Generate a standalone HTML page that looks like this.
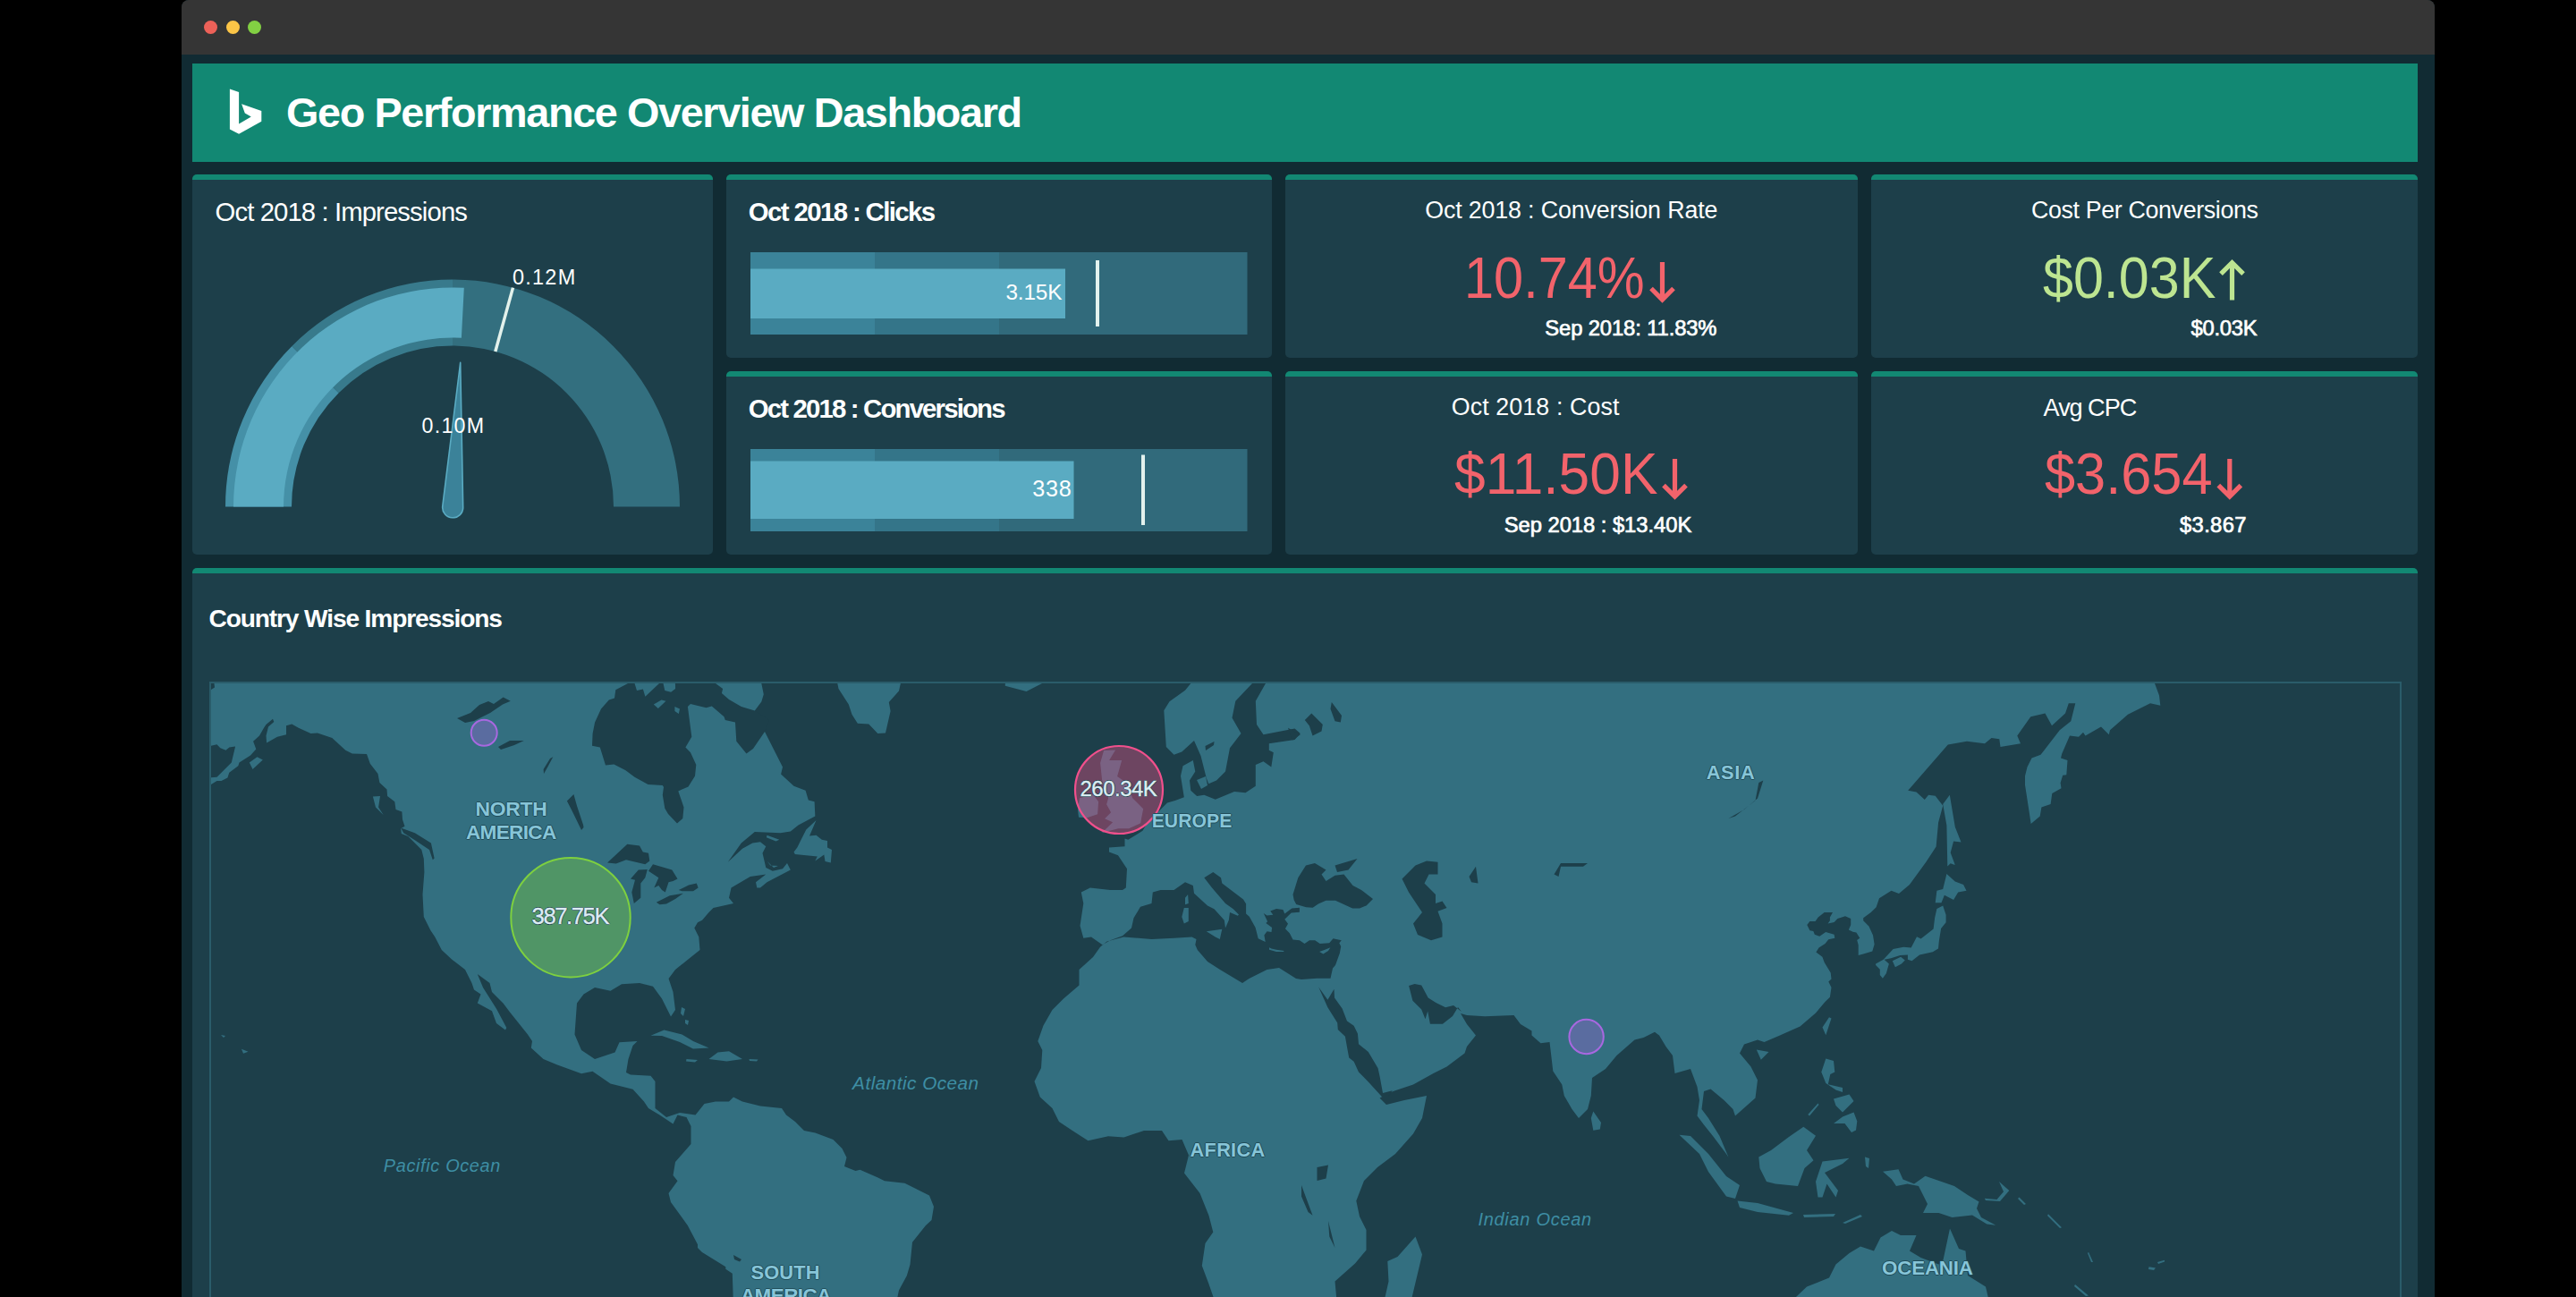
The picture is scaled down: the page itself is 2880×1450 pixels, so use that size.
<!DOCTYPE html>
<html><head><meta charset="utf-8">
<style>
html,body{margin:0;padding:0;width:2880px;height:1450px;overflow:hidden;background:#000;}
*{box-sizing:border-box;}
body{font-family:"Liberation Sans",sans-serif;position:relative;}
.abs{position:absolute;}
.win{position:absolute;left:203px;top:0;width:2519px;height:1450px;background:#112b33;border-radius:8px 8px 0 0;overflow:hidden;}
.chrome{position:absolute;left:0;top:0;width:100%;height:61px;background:#353535;}
.dot{position:absolute;top:23px;width:15px;height:15px;border-radius:50%;}
.hdr{position:absolute;left:215px;top:71px;width:2488px;height:110px;background:#128873;}
.card{position:absolute;background:#1d3f4a;border-top:6px solid #128873;border-radius:5px;}
.t{position:absolute;white-space:nowrap;line-height:1;color:#fff;}
.lab{color:#87c5d8;font-weight:700;text-shadow:1px 0 0 #1f4c59,-1px 0 0 #1f4c59,0 1px 0 #1f4c59,0 -1px 0 #1f4c59;}
.ocn{color:#3e8ea4;}
.bub{color:#dcedf3;-webkit-text-stroke:0.4px #dcedf3;text-shadow:1px 0 0 #24424c,-1px 0 0 #24424c,0 1px 0 #24424c,0 -1px 0 #24424c;}
</style></head>
<body>
<div class="win">
  <div class="chrome"></div>
  <div class="dot" style="left:25px;background:#ed6158"></div>
  <div class="dot" style="left:50px;background:#fbc547"></div>
  <div class="dot" style="left:74px;background:#82d043"></div>
</div>
<div class="hdr"></div>
<svg class="abs" style="left:0;top:0" width="2880" height="200">
  <path d="M256.9,99.6 L267.1,103.1 L267.1,138.5 L280.8,130.4 L273.8,126.5 L270.1,116.3 L292.3,123.9 L292.3,135.7 L267.1,149.8 L256.9,144.5 Z" fill="#fff"/>
</svg>
<div class="t" style="left:320px;top:103px;font-size:46.8px;font-weight:700;letter-spacing:-1.38px">Geo Performance Overview Dashboard</div>

<div class="card" style="left:215px;top:195px;width:582px;height:425px"></div>
<div class="card" style="left:812px;top:195px;width:610px;height:205px"></div>
<div class="card" style="left:812px;top:415px;width:610px;height:205px"></div>
<div class="card" style="left:1437px;top:195px;width:640px;height:205px"></div>
<div class="card" style="left:1437px;top:415px;width:640px;height:205px"></div>
<div class="card" style="left:2092px;top:195px;width:611px;height:205px"></div>
<div class="card" style="left:2092px;top:415px;width:611px;height:205px"></div>
<div class="card" style="left:215px;top:635px;width:2488px;height:900px;border-radius:5px 5px 0 0"></div>

<svg class="abs" style="left:0;top:0" width="2880" height="640">
  <path d="M252.0,566.5 A254,254 0 0 1 326.4,386.9 L378.7,439.2 A180,180 0 0 0 326.0,566.5 Z" fill="#4590a7"/>
  <path d="M326.4,386.9 A254,254 0 0 1 506.0,312.5 L506.0,386.5 A180,180 0 0 0 378.7,439.2 Z" fill="#387a8c"/>
  <path d="M506.0,312.5 A254,254 0 0 1 760.0,566.5 L686.0,566.5 A180,180 0 0 0 506.0,386.5 Z" fill="#336f7f"/>
  <path d="M261.0,566.5 A245,245 0 0 1 518.8,321.8 L515.9,377.8 A189,189 0 0 0 317.0,566.5 Z" fill="#5aabc2"/>
  <path d="M553.8,393.0 L573.5,321.6" stroke="#e3f2ec" stroke-width="3.5"/>
  <path d="M514.7,405.4 L517.7,567.9 A11.5,11.5 0 0 1 494.7,566.7 Z" fill="#3b8299" stroke="#5aabc2" stroke-width="1.6" stroke-linejoin="round"/>
  <!-- bullet clicks -->
  <rect x="839" y="282" width="139" height="92" fill="#3b8399"/>
  <rect x="978" y="282" width="139" height="92" fill="#347589"/>
  <rect x="1117" y="282" width="277.5" height="92" fill="#316a7b"/>
  <rect x="839" y="300.5" width="352" height="55.5" fill="#5aabc2"/>
  <rect x="1225" y="291" width="4" height="74" fill="#e3f2ee"/>
  <!-- bullet conversions -->
  <rect x="839" y="502" width="139" height="92" fill="#3b8399"/>
  <rect x="978" y="502" width="139" height="92" fill="#347589"/>
  <rect x="1117" y="502" width="277.5" height="92" fill="#316a7b"/>
  <rect x="839" y="515.5" width="361.5" height="64.5" fill="#5aabc2"/>
  <rect x="1276" y="508.5" width="4" height="78.5" fill="#e3f2ee"/>
</svg>
<div class="t" style="left:240.5px;top:222.2px;font-size:29.28px;letter-spacing:-0.881px;font-weight:400;color:#fff">Oct 2018 : Impressions</div>
<div class="t" style="left:573px;top:299.0px;font-size:23.48px;letter-spacing:1.25px;font-weight:400;color:#fff">0.12M</div>
<div class="t" style="left:471.5px;top:464.7px;font-size:23.19px;letter-spacing:1.275px;font-weight:400;color:#fff">0.10M</div>
<div class="t" style="left:836.8px;top:222.0px;font-size:29.42px;letter-spacing:-1.631px;font-weight:700;color:#fff">Oct 2018 : Clicks</div>
<div class="t" style="left:1124.5px;top:315.1px;font-size:24.35px;letter-spacing:-0.175px;font-weight:400;color:#fff">3.15K</div>
<div class="t" style="left:836.8px;top:442.0px;font-size:29.42px;letter-spacing:-1.862px;font-weight:700;color:#fff">Oct 2018 : Conversions</div>
<div class="t" style="left:1154.3px;top:534.4px;font-size:25.22px;letter-spacing:0.75px;font-weight:400;color:#fff">338</div>
<div class="t" style="left:1593.2px;top:221.9px;font-size:26.81px;letter-spacing:-0.14px;font-weight:400;color:#fff">Oct 2018 : Conversion Rate</div>
<div class="t" style="left:1637.2px;top:277.8px;font-size:65.07px;transform:scaleX(0.914);transform-origin:0 0;color:#f2636b">10.74%</div>
<div class="t" style="left:1727.3px;top:355.2px;font-size:23.77px;letter-spacing:-0.107px;font-weight:400;-webkit-text-stroke:0.7px #fff;color:#fff">Sep 2018: 11.83%</div>
<div class="t" style="left:2271px;top:221.9px;font-size:26.81px;letter-spacing:-0.353px;font-weight:400;color:#fff">Cost Per Conversions</div>
<div class="t" style="left:2283.7px;top:277.6px;font-size:65.22px;transform:scaleX(0.9355);transform-origin:0 0;color:#bde591">$0.03K</div>
<div class="t" style="left:2449.6px;top:355.2px;font-size:23.77px;letter-spacing:-0.26px;font-weight:400;-webkit-text-stroke:0.7px #fff;color:#fff">$0.03K</div>
<div class="t" style="left:1622.8px;top:441.9px;font-size:26.81px;letter-spacing:0.1px;font-weight:400;color:#fff">Oct 2018 : Cost</div>
<div class="t" style="left:1626.2px;top:498.2px;font-size:64.35px;transform:scaleX(0.968);transform-origin:0 0;color:#f2636b">$11.50K</div>
<div class="t" style="left:1681.7px;top:575.2px;font-size:23.77px;letter-spacing:-0.029px;font-weight:400;-webkit-text-stroke:0.7px #fff;color:#fff">Sep 2018 : $13.40K</div>
<div class="t" style="left:2284.6px;top:441.7px;font-size:27.1px;letter-spacing:-1.05px;font-weight:400;color:#fff">Avg CPC</div>
<div class="t" style="left:2286.2px;top:498.2px;font-size:64.49px;transform:scaleX(0.9507);transform-origin:0 0;color:#f2636b">$3.654</div>
<div class="t" style="left:2437.0px;top:575.2px;font-size:23.77px;letter-spacing:0.36px;font-weight:400;-webkit-text-stroke:0.7px #fff;color:#fff">$3.867</div>
<div class="t" style="left:233.5px;top:677.6px;font-size:28.12px;letter-spacing:-1.126px;font-weight:700;color:#fff">Country Wise Impressions</div>
<svg class="abs" style="left:0;top:0" width="2880" height="640"><path d="M1858.5,293 V334 M1846.0,322.5 L1858.5,335 L1871.0,322.5" stroke="#f2636b" stroke-width="5.2" fill="none" stroke-linecap="butt" stroke-linejoin="miter"/><path d="M2495.5,335.6 V294.6 M2483.0,306.1 L2495.5,293.6 L2508.0,306.1" stroke="#bde591" stroke-width="5.2" fill="none" stroke-linecap="butt" stroke-linejoin="miter"/><path d="M1872.5,513.1 V554.1 M1860.0,542.6 L1872.5,555.1 L1885.0,542.6" stroke="#f2636b" stroke-width="5.2" fill="none" stroke-linecap="butt" stroke-linejoin="miter"/><path d="M2492.8,513.1 V554.1 M2480.3,542.6 L2492.8,555.1 L2505.3,542.6" stroke="#f2636b" stroke-width="5.2" fill="none" stroke-linecap="butt" stroke-linejoin="miter"/></svg>
<svg class="abs" style="left:0;top:0" width="2880" height="1450">
<defs><clipPath id="mc"><rect x="236" y="764" width="2447" height="700"/></clipPath></defs>
<rect x="235" y="763" width="2449" height="720" fill="none" stroke="#2a5c6a" stroke-width="2"/>
<g clip-path="url(#mc)">
<path fill="#336f80" d="M225.0,750.0 L855.0,750.0 L851.3,764.0 L853.8,776.3 L851.3,784.4 L843.8,794.4 L855.0,818.1 L875.0,857.5 L873.1,865.6 L887.5,878.8 L900.6,883.8 L903.8,894.4 L910.6,896.3 L911.3,911.3 L911.3,912.5 L892.5,922.5 L883.8,929.4 L872.5,931.3 L843.8,930.0 L828.8,942.5 L813.8,963.8 L830.0,948.8 L841.3,942.5 L850.0,941.3 L856.3,946.3 L852.5,953.8 L856.3,970.0 L863.8,973.8 L875.0,971.3 L880.0,965.0 L883.8,972.5 L857.5,986.3 L850.0,992.5 L846.3,992.5 L845.0,986.3 L856.3,977.5 L838.8,980.0 L817.5,992.5 L815.0,1003.8 L820.0,1010.0 L797.5,1015.0 L792.5,1020.0 L785.0,1028.8 L780.0,1031.3 L776.3,1037.5 L781.3,1047.5 L782.5,1062.0 L770.0,1072.0 L755.0,1084.0 L747.5,1094.0 L752.5,1109.0 L755.0,1129.0 L750.0,1136.5 L740.0,1116.5 L730.0,1102.8 L715.0,1099.0 L695.0,1100.3 L682.5,1107.8 L665.0,1104.0 L652.5,1111.5 L645.0,1121.5 L642.5,1156.5 L650.0,1174.0 L665.0,1184.0 L687.5,1176.5 L692.5,1165.3 L712.5,1164.0 L707.5,1169.0 L702.5,1184.0 L700.0,1199.0 L705.0,1201.5 L727.5,1202.8 L732.5,1209.0 L732.5,1239.0 L745.0,1249.0 L760.0,1244.0 L777.5,1246.5 L787.5,1234.0 L800.0,1231.5 L815.0,1231.5 L820.0,1226.5 L830.0,1231.5 L850.0,1236.5 L874.0,1239.0 L879.0,1246.5 L889.0,1254.0 L899.0,1264.0 L911.5,1266.5 L931.5,1274.0 L941.5,1284.0 L946.5,1294.0 L944.0,1304.0 L956.5,1309.0 L961.5,1307.8 L981.5,1316.5 L989.0,1320.3 L1011.5,1322.8 L1024.0,1329.0 L1039.0,1336.5 L1044.0,1349.0 L1041.5,1364.0 L1035.0,1370.0 L1020.0,1388.8 L1017.5,1413.8 L1013.8,1426.3 L1005.0,1442.5 L1001.3,1460.0 L820.0,1460.0 L818.8,1423.8 L811.3,1418.8 L811.3,1416.3 L785.0,1400.0 L780.0,1395.0 L780.0,1391.3 L768.8,1370.0 L750.0,1344.0 L747.5,1334.0 L757.5,1320.3 L752.5,1314.0 L755.0,1299.0 L772.5,1279.0 L772.5,1259.0 L767.5,1249.0 L757.5,1246.5 L752.5,1256.5 L737.5,1246.5 L725.0,1239.0 L720.0,1231.5 L707.5,1217.8 L682.5,1211.5 L662.5,1197.8 L650.0,1200.3 L622.5,1190.3 L607.5,1184.0 L593.8,1171.5 L595.0,1164.0 L590.0,1156.5 L570.0,1131.5 L562.5,1121.5 L550.0,1109.0 L547.5,1099.0 L533.8,1089.0 L540.0,1104.0 L555.0,1127.8 L566.3,1149.0 L565.0,1151.5 L555.0,1144.0 L550.0,1130.3 L533.8,1121.5 L537.5,1111.5 L530.0,1106.5 L527.5,1099.0 L520.0,1084.0 L505.0,1072.5 L493.8,1062.0 L486.3,1047.5 L481.3,1040.0 L473.8,1025.0 L472.5,1000.0 L474.4,975.0 L473.8,960.0 L471.3,950.0 L456.3,935.0 L448.8,931.9 L448.1,926.3 L452.5,923.8 L450.0,916.3 L449.4,907.5 L442.5,905.0 L441.3,896.3 L433.1,890.0 L432.5,882.5 L424.4,875.0 L422.5,865.0 L413.8,853.8 L410.0,843.1 L393.8,842.5 L386.3,838.8 L371.3,825.0 L355.0,819.4 L347.5,820.0 L333.8,813.8 L326.3,809.4 L320.0,811.3 L320.0,821.3 L310.0,823.8 L298.1,830.6 L297.5,822.5 L300.0,812.5 L306.3,806.9 L305.0,803.8 L297.5,810.0 L295.0,813.8 L290.0,822.5 L283.1,828.8 L286.3,837.5 L280.0,844.4 L267.5,852.5 L266.3,856.3 L256.3,863.8 L254.4,869.4 L247.5,873.1 L242.5,873.1 L236.0,876.9 L230.0,877.0 L225.0,877.0ZM936.3,750.0 L936.3,764.0 L937.5,770.0 L948.8,787.5 L952.5,798.8 L958.8,808.8 L971.3,809.4 L981.3,820.0 L990.0,819.4 L995.6,795.0 L993.8,785.0 L1005.0,772.5 L1006.9,764.0 L1006.9,750.0ZM1123.8,750.0 L1123.8,766.8 L1147.5,773.0 L1165.0,764.0 L1165.0,750.0ZM278.8,852.5 L287.5,846.3 L293.8,849.4 L282.5,860.0ZM416.9,890.6 L425.0,890.0 L423.1,902.5 L428.8,911.3 L420.0,902.5ZM912.5,916.9 L905.0,934.4 L912.5,933.8 L918.8,938.8 L925.0,940.0 L925.0,947.5 L930.0,950.0 L928.8,964.4 L922.5,963.1 L921.3,955.6 L911.3,962.5 L913.8,957.5 L888.8,955.0 L887.5,952.5 L891.3,947.5 L895.0,940.0 L901.3,927.5ZM727.5,1157.8 L742.5,1151.5 L762.5,1156.5 L775.0,1164.0 L792.5,1171.5 L775.0,1172.5 L760.0,1165.0 L740.0,1158.0ZM802.5,1176.5 L815.0,1175.3 L830.0,1184.0 L812.5,1186.5 L792.5,1184.0ZM767.5,1184.0 L780.0,1185.0 L777.0,1187.5 L767.0,1186.5ZM837.5,1184.0 L847.5,1184.5 L846.0,1186.5 L838.0,1186.0ZM762.0,1126.0 L766.0,1128.0 L764.0,1136.0 L761.0,1133.0ZM766.0,1140.0 L770.0,1141.0 L769.0,1146.0 L766.0,1144.0ZM247.0,1157.0 L252.0,1158.0 L250.0,1160.0ZM270.0,1172.8 L277.5,1175.8 L272.0,1177.8ZM1331.3,750.0 L1331.3,764.0 L1325.0,771.8 L1307.5,784.3 L1301.3,794.3 L1303.8,835.0 L1312.5,843.8 L1321.3,840.6 L1335.0,828.1 L1342.5,845.0 L1348.8,870.0 L1351.3,876.3 L1360.0,872.5 L1370.0,862.5 L1375.0,836.3 L1387.5,820.0 L1377.5,802.5 L1381.3,783.8 L1400.0,764.0 L1400.0,750.0 L1415.0,750.0 L1415.0,764.0 L1403.8,783.8 L1405.0,810.0 L1412.5,821.3 L1447.5,814.4 L1453.8,820.0 L1447.5,826.9 L1418.8,831.3 L1418.8,838.8 L1423.8,841.3 L1421.3,857.5 L1412.5,851.3 L1403.8,855.0 L1403.8,878.8 L1392.5,886.3 L1380.0,885.0 L1358.8,893.8 L1346.3,888.8 L1338.1,890.0 L1331.3,883.8 L1330.0,872.5 L1336.3,862.5 L1333.8,850.0 L1322.5,856.3 L1320.0,867.5 L1323.8,891.3 L1313.8,895.0 L1305.0,897.5 L1295.0,907.5 L1285.0,916.0 L1277.5,928.8 L1261.3,938.8 L1257.5,937.5 L1257.5,946.3 L1240.0,947.5 L1240.0,952.5 L1250.0,956.3 L1260.0,971.3 L1258.8,992.5 L1255.0,995.0 L1241.3,995.0 L1218.8,992.5 L1208.8,997.5 L1211.3,1010.0 L1207.5,1035.0 L1211.3,1048.8 L1220.0,1047.5 L1232.5,1056.3 L1230.0,1058.8 L1222.0,1070.0 L1206.5,1084.0 L1206.5,1101.5 L1189.0,1116.5 L1176.5,1129.0 L1166.5,1146.5 L1160.3,1164.0 L1165.3,1174.0 L1164.0,1194.0 L1156.5,1209.0 L1162.8,1226.5 L1176.5,1239.0 L1184.0,1254.0 L1199.0,1264.0 L1216.5,1275.3 L1239.0,1270.3 L1256.5,1271.5 L1279.0,1264.0 L1299.0,1264.0 L1306.5,1275.3 L1321.5,1274.0 L1329.0,1291.5 L1324.0,1311.5 L1341.5,1334.0 L1351.5,1359.0 L1356.3,1377.5 L1347.5,1390.0 L1343.8,1415.0 L1351.3,1435.0 L1360.0,1460.0 L1495.0,1460.0 L1492.5,1432.5 L1515.0,1412.5 L1527.5,1397.5 L1527.5,1375.0 L1520.0,1360.0 L1516.3,1342.5 L1525.0,1320.0 L1540.0,1305.0 L1560.0,1290.0 L1580.0,1267.5 L1590.0,1250.0 L1595.0,1225.0 L1570.0,1230.0 L1550.0,1235.0 L1542.5,1227.5 L1557.5,1220.0 L1580.0,1212.5 L1602.5,1200.0 L1617.5,1192.5 L1637.5,1177.5 L1640.0,1170.0 L1650.0,1157.5 L1640.0,1145.0 L1633.0,1133.0 L1640.0,1135.0 L1660.0,1136.3 L1692.5,1135.0 L1700.0,1145.0 L1712.5,1152.5 L1712.5,1157.5 L1722.5,1166.3 L1732.5,1165.0 L1736.3,1197.5 L1746.3,1212.5 L1748.8,1225.0 L1757.5,1240.0 L1765.0,1250.0 L1775.0,1240.0 L1778.8,1225.0 L1780.0,1205.0 L1795.0,1195.0 L1807.5,1180.0 L1827.5,1162.5 L1837.5,1160.0 L1850.0,1153.8 L1855.0,1157.5 L1862.5,1170.0 L1870.0,1180.0 L1872.5,1200.0 L1890.0,1195.0 L1897.5,1215.0 L1900.0,1230.0 L1897.5,1247.5 L1905.0,1257.5 L1915.0,1270.0 L1930.0,1290.0 L1932.5,1293.8 L1922.5,1270.0 L1910.0,1250.0 L1902.5,1240.0 L1905.0,1220.0 L1912.5,1217.5 L1927.5,1230.0 L1937.5,1240.0 L1940.0,1247.5 L1962.5,1227.5 L1965.0,1207.5 L1957.5,1192.5 L1945.0,1177.5 L1950.0,1167.5 L1965.0,1162.5 L1972.5,1165.0 L1990.0,1157.5 L2012.5,1147.5 L2030.0,1132.5 L2040.5,1120.0 L2045.9,1114.7 L2047.5,1103.9 L2044.3,1097.6 L2047.5,1094.5 L2046.7,1087.5 L2039.7,1075.9 L2037.4,1069.7 L2030.4,1064.6 L2033.5,1059.6 L2040.5,1054.9 L2044.3,1050.3 L2051.3,1048.7 L2050.6,1044.8 L2041.2,1042.1 L2034.3,1046.8 L2028.8,1044.8 L2027.3,1041.0 L2023.4,1040.2 L2020.3,1034.0 L2023.4,1030.1 L2029.6,1030.1 L2032.7,1025.4 L2039.7,1020.0 L2049.0,1020.0 L2045.9,1025.4 L2045.9,1029.3 L2043.6,1032.4 L2050.6,1030.9 L2054.4,1027.0 L2063.0,1024.3 L2069.2,1027.0 L2069.2,1034.0 L2066.9,1039.4 L2071.5,1041.7 L2075.4,1042.5 L2079.3,1048.7 L2076.2,1051.1 L2077.7,1056.5 L2077.7,1068.1 L2083.2,1066.6 L2093.3,1063.5 L2095.6,1055.7 L2094.0,1045.6 L2089.4,1035.5 L2083.2,1029.3 L2083.2,1026.2 L2091.7,1020.0 L2097.6,1014.3 L2101.0,1004.2 L2114.5,995.7 L2123.0,999.1 L2134.9,988.9 L2153.5,963.5 L2164.6,946.5 L2167.1,919.4 L2172.2,900.7 L2163.7,889.7 L2156.1,888.8 L2151.8,893.9 L2142.5,885.4 L2133.2,883.7 L2177.8,832.5 L2199.0,828.8 L2219.0,831.3 L2226.5,825.0 L2235.3,826.3 L2236.5,835.0 L2259.0,831.3 L2255.3,822.5 L2270.3,801.3 L2286.5,797.5 L2294.0,811.3 L2309.0,797.5 L2312.8,786.3 L2320.3,786.3 L2315.3,806.3 L2302.8,816.3 L2281.5,843.8 L2271.5,847.5 L2266.5,857.5 L2264.0,867.5 L2264.0,877.5 L2269.0,910.0 L2270.6,921.1 L2280.7,912.6 L2282.4,902.4 L2292.6,899.0 L2294.3,887.1 L2304.5,881.2 L2303.6,875.3 L2306.2,866.8 L2310.3,866.3 L2311.5,850.0 L2304.0,847.5 L2305.3,842.5 L2314.0,822.5 L2324.0,823.8 L2329.0,818.8 L2331.5,822.5 L2349.0,812.5 L2357.8,821.3 L2359.0,816.3 L2379.0,798.8 L2404.0,786.3 L2415.3,788.8 L2414.0,777.5 L2409.0,764.0 L2409.0,750.0ZM1234.1,839.0 L1247.1,838.5 L1240.1,850.1 L1254.2,850.1 L1249.1,868.1 L1259.2,875.1 L1266.2,892.2 L1278.2,904.2 L1276.2,914.2 L1275.2,920.3 L1262.2,926.3 L1250.2,926.3 L1232.0,931.0 L1244.1,919.2 L1235.1,915.2 L1242.1,908.2 L1237.1,899.2 L1239.1,892.2 L1232.1,872.1 L1230.1,853.1ZM1207.0,892.2 L1222.1,888.2 L1228.1,896.2 L1227.1,910.2 L1215.1,914.2 L1206.0,913.7 L1205.0,905.2ZM1347.5,834.0 L1357.5,829.0 L1357.0,833.0 L1348.0,839.0ZM1338.0,872.0 L1348.0,868.0 L1350.0,878.0 L1343.0,882.0ZM1781.3,1242.5 L1790.0,1255.0 L1788.8,1262.5 L1781.3,1263.8 L1778.8,1250.0ZM1546.3,1460.0 L1552.5,1432.5 L1551.3,1410.0 L1562.5,1405.0 L1582.5,1382.5 L1590.0,1402.5 L1576.3,1460.0ZM2172.2,899.0 L2176.4,922.8 L2177.3,968.5 L2180.7,965.2 L2185.8,966.9 L2180.7,953.3 L2184.1,940.6 L2192.5,941.4 L2185.8,924.5 L2179.8,888.8ZM2176.4,977.0 L2185.8,985.5 L2195.1,988.9 L2198.5,995.7 L2189.2,997.4 L2184.1,1005.9 L2173.9,1000.8 L2170.5,1009.3 L2163.7,1009.3 L2165.4,995.7 L2172.2,994.0ZM2165.4,1016.0 L2172.2,1012.6 L2175.6,1022.8 L2175.6,1031.3 L2170.1,1037.9 L2167.8,1052.6 L2167.0,1060.4 L2160.8,1064.3 L2146.1,1067.4 L2137.5,1074.3 L2132.9,1072.8 L2132.9,1067.4 L2124.3,1068.1 L2114.2,1071.2 L2106.5,1072.8 L2111.9,1077.5 L2108.8,1088.3 L2104.9,1093.8 L2101.8,1089.9 L2101.8,1083.7 L2097.1,1079.0 L2097.1,1077.5 L2105.7,1072.8 L2116.6,1061.1 L2128.2,1058.8 L2136.7,1059.6 L2143.0,1047.2 L2147.6,1049.5 L2161.6,1038.6 L2163.1,1026.2ZM2115.8,1074.3 L2125.1,1069.7 L2129.8,1073.6 L2125.9,1077.5 L2118.9,1081.3ZM2045.0,1137.3 L2047.5,1138.5 L2041.3,1157.3 L2037.5,1148.5ZM1963.8,1173.5 L1977.5,1176.0 L1968.8,1184.8ZM2041.3,1183.5 L2050.0,1186.0 L2051.3,1198.5 L2046.3,1201.0 L2043.8,1212.3 L2060.0,1216.0 L2060.0,1221.0 L2052.5,1218.5 L2041.3,1211.0 L2036.3,1198.5ZM2050.0,1228.5 L2067.5,1223.5 L2072.5,1231.0 L2060.0,1243.5 L2052.5,1236.0ZM2050.0,1256.0 L2060.0,1248.5 L2072.5,1243.5 L2076.3,1253.5 L2075.0,1263.5 L2070.0,1266.0 L2062.5,1256.0ZM2021.3,1246.0 L2032.5,1233.5 L2033.5,1235.0 L2023.0,1247.5ZM1966.3,1293.5 L1980.0,1286.0 L2000.0,1271.0 L2016.3,1259.8 L2030.0,1269.8 L2020.0,1286.0 L2027.5,1297.3 L2017.5,1306.0 L2010.0,1326.0 L1985.0,1323.5 L1975.0,1321.0 L1967.5,1306.0ZM1877.5,1268.8 L1890.0,1270.0 L1910.0,1290.0 L1930.0,1315.0 L1945.0,1325.0 L1940.0,1340.0 L1930.0,1337.5 L1910.0,1310.0 L1900.0,1290.0ZM1942.5,1342.5 L1965.0,1345.0 L2005.0,1356.0 L2000.0,1358.8 L1965.0,1355.0 L1945.0,1350.0ZM2016.0,1358.0 L2052.0,1357.0 L2050.0,1360.0 L2017.0,1361.0ZM2060.0,1367.0 L2080.0,1358.0 L2082.0,1360.0 L2063.0,1368.0ZM2037.5,1298.5 L2067.5,1294.8 L2060.0,1301.0 L2040.0,1311.0 L2055.0,1331.0 L2052.5,1338.5 L2042.5,1323.5 L2037.5,1338.5 L2032.5,1338.5 L2030.0,1321.0ZM2085.0,1293.5 L2090.0,1295.0 L2089.0,1306.0 L2086.0,1304.0ZM2105.0,1309.8 L2122.5,1307.3 L2127.5,1318.5 L2140.0,1323.5 L2152.5,1314.8 L2185.0,1326.0 L2200.0,1336.0 L2212.5,1343.5 L2210.0,1351.0 L2215.0,1361.0 L2231.3,1369.8 L2221.3,1368.5 L2205.0,1358.5 L2182.5,1361.0 L2167.5,1356.0 L2150.0,1356.0 L2155.0,1346.0 L2145.0,1326.0 L2132.5,1323.5 L2120.0,1326.0 L2115.0,1318.5ZM2218.8,1339.8 L2232.5,1341.0 L2240.0,1332.3 L2235.0,1321.0 L2246.3,1331.0 L2236.0,1343.0 L2220.0,1342.0ZM1997.5,1460.0 L2020.0,1438.5 L2045.0,1428.5 L2052.5,1413.5 L2067.5,1401.0 L2080.0,1393.5 L2095.0,1398.5 L2102.5,1383.5 L2115.0,1376.0 L2125.0,1381.0 L2142.5,1381.0 L2135.0,1398.5 L2147.5,1406.0 L2167.5,1413.5 L2172.5,1408.5 L2180.0,1373.5 L2190.0,1396.0 L2197.5,1398.5 L2200.0,1426.0 L2220.0,1438.5 L2225.0,1460.0ZM2257.5,1338.5 L2265.0,1346.0 L2263.0,1347.0 L2256.0,1340.0ZM2290.0,1357.3 L2305.0,1372.3 L2303.0,1373.0 L2289.0,1359.0ZM2335.0,1399.8 L2340.0,1411.0 L2338.0,1411.0 L2334.0,1401.0ZM2402.5,1416.3 L2410.0,1417.5 L2408.0,1420.0 L2402.0,1419.0ZM2412.0,1411.0 L2420.0,1408.8 L2420.0,1410.5 L2413.0,1413.0ZM2320.0,1436.0 L2335.0,1448.5 L2332.0,1449.0 L2319.0,1438.0Z"/>
<path fill="#1d3f4a" d="M230.0,760.0 L239.0,760.0 L240.0,768.5 L230.0,775.0ZM225.0,836.3 L242.5,832.3 L246.3,836.3 L252.5,838.8 L256.3,835.6 L263.1,834.4 L260.0,847.5 L258.8,852.5 L242.5,868.8 L225.0,870.0ZM448.1,925.6 L463.8,931.3 L481.9,942.5 L485.6,959.4 L483.8,961.3 L480.0,950.0 L465.0,940.0 L451.3,931.3ZM700.0,750.0 L702.0,764.0 L688.3,771.3 L687.0,780.6 L680.8,782.5 L672.0,792.5 L665.1,807.5 L662.6,820.0 L662.0,833.8 L670.8,835.6 L677.0,855.6 L686.4,854.4 L699.5,861.3 L709.5,868.8 L724.5,876.9 L740.8,878.1 L742.0,880.0 L740.8,888.8 L743.3,903.8 L747.0,910.0 L757.0,920.6 L763.3,915.0 L764.5,902.5 L758.3,884.4 L769.5,879.4 L777.0,867.5 L778.3,855.0 L772.0,841.3 L766.4,835.6 L773.3,823.8 L772.0,813.8 L768.9,790.0 L772.0,786.9 L789.5,791.3 L795.8,789.4 L809.5,801.3 L810.8,805.0 L822.0,807.5 L823.3,828.8 L834.5,842.5 L842.0,836.9 L855.0,818.1 L860.0,805.0 L843.8,794.4 L828.8,790.0 L815.0,781.9 L806.9,775.0 L808.1,770.0 L800.0,764.0 L800.0,750.0ZM679.0,964.4 L701.3,943.8 L715.0,945.6 L718.8,952.5 L725.0,953.8 L726.3,962.5 L721.3,966.3 L700.0,961.3 L688.8,965.6ZM705.0,982.5 L713.8,972.5 L723.8,971.9 L721.3,981.3 L716.3,987.5 L716.3,1003.8 L708.8,1010.0 L706.3,997.5 L710.0,983.8ZM730.0,966.3 L751.3,972.5 L757.5,982.5 L752.5,985.0 L747.5,986.3 L743.8,997.5 L740.0,995.0 L736.3,990.0 L731.3,992.5 L736.3,981.3 L725.0,973.8ZM733.8,1008.8 L748.8,1001.3 L763.8,998.8 L755.0,1005.0 L745.0,1010.6 L737.5,1011.3ZM758.8,995.0 L770.0,989.4 L778.8,987.5 L780.6,992.5 L775.0,996.3 L762.5,996.3ZM633.9,895.6 L641.4,888.1 L645.1,901.3 L652.0,922.0 L652.5,925.0 L650.0,928.1 L642.5,912.5 L638.8,905.0ZM511.0,803.0 L526.0,797.0 L536.0,788.0 L546.0,784.0 L552.0,787.0 L562.6,779.4 L570.8,783.8 L562.0,787.5 L548.0,797.0 L530.0,806.0 L520.0,808.0ZM557.0,835.0 L570.0,828.0 L585.8,828.0 L575.0,833.0 L560.0,838.0ZM607.6,860.0 L615.0,848.0 L618.3,846.3 L612.0,858.0 L608.0,865.0ZM1232.5,1056.3 L1241.3,1051.3 L1255.0,1046.3 L1265.0,1037.5 L1267.5,1026.3 L1275.0,1013.8 L1287.5,1010.0 L1288.8,997.5 L1297.5,995.0 L1312.5,995.0 L1325.0,986.3 L1333.8,990.0 L1335.0,998.8 L1350.0,1012.5 L1357.5,1016.3 L1368.8,1028.8 L1370.0,1037.5 L1373.8,1028.8 L1375.0,1020.0 L1383.8,1023.8 L1385.0,1022.5 L1378.8,1016.3 L1370.0,1010.0 L1355.0,992.5 L1346.3,981.3 L1356.3,975.0 L1365.0,981.3 L1366.3,987.5 L1390.0,1005.6 L1393.1,1010.5 L1393.1,1021.6 L1396.8,1024.7 L1403.6,1037.0 L1406.7,1049.3 L1414.7,1053.0 L1413.4,1045.6 L1416.5,1041.3 L1421.5,1041.9 L1422.1,1037.0 L1415.3,1032.1 L1417.1,1030.2 L1412.8,1021.0 L1416.5,1023.4 L1423.3,1022.8 L1420.2,1018.5 L1427.0,1016.0 L1434.4,1017.0 L1436.3,1021.6 L1444.3,1015.4 L1452.9,1014.8 L1452.9,1019.7 L1443.7,1020.4 L1436.3,1027.8 L1440.0,1032.7 L1436.9,1038.2 L1441.8,1043.2 L1445.5,1050.6 L1452.9,1051.2 L1458.5,1054.9 L1464.0,1051.2 L1470.2,1051.2 L1475.7,1054.9 L1486.2,1054.3 L1490.5,1049.3 L1499.8,1051.2 L1497.3,1054.3 L1499.2,1058.0 L1497.9,1065.4 L1493.0,1078.9 L1490.0,1082.5 L1487.5,1093.8 L1472.5,1093.8 L1455.0,1095.0 L1449.0,1094.0 L1430.0,1082.0 L1416.5,1084.0 L1396.5,1094.0 L1389.0,1099.0 L1364.0,1084.0 L1350.0,1075.0 L1338.8,1062.0 L1336.3,1056.3 L1337.5,1050.0 L1332.5,1047.5 L1312.5,1048.8 L1287.5,1050.0 L1256.3,1047.5 L1237.5,1052.5 L1230.0,1058.8ZM1445.5,1000.0 L1451.3,981.3 L1460.0,967.5 L1470.0,965.0 L1482.5,972.5 L1477.5,977.5 L1482.5,985.0 L1492.5,978.8 L1502.5,977.5 L1512.5,990.0 L1522.0,995.0 L1535.0,1005.0 L1527.5,1012.5 L1520.0,1015.4 L1512.1,1015.4 L1493.0,1006.8 L1482.5,1006.8 L1473.9,1010.5 L1467.7,1014.8 L1460.3,1014.2 L1449.2,1011.1 L1446.7,1006.2ZM1492.5,967.5 L1517.5,960.0 L1507.5,972.5 L1495.0,975.0ZM1567.5,982.5 L1582.5,967.5 L1595.0,962.5 L1607.5,963.8 L1607.5,977.5 L1597.5,977.5 L1592.5,987.5 L1605.0,1000.0 L1605.0,1010.0 L1612.5,1007.5 L1617.5,1015.0 L1607.5,1018.8 L1612.5,1032.5 L1612.5,1047.5 L1600.0,1051.3 L1585.0,1045.0 L1580.0,1032.5 L1590.0,1020.0 L1575.0,997.5ZM1642.5,980.0 L1650.0,968.8 L1652.5,987.5 L1645.0,986.3ZM1737.5,977.5 L1745.0,965.0 L1775.0,965.0 L1770.0,968.8 L1745.0,968.8 L1742.5,980.0ZM1932.5,915.0 L1950.0,905.0 L1965.0,892.5 L1971.3,872.5 L1966.3,875.0 L1962.5,895.0 L1940.0,912.5ZM1440.0,813.8 L1453.8,821.3 L1445.0,827.5ZM1458.8,805.0 L1466.3,797.5 L1478.8,810.0 L1477.5,817.5 L1467.5,822.5 L1463.8,811.3ZM1488.8,785.0 L1500.0,800.0 L1498.8,807.5 L1492.5,806.3 L1487.5,792.5ZM1474.2,1103.6 L1484.4,1117.7 L1491.5,1105.8 L1492.0,1115.5 L1500.6,1127.4 L1506.0,1141.4 L1513.6,1146.8 L1517.9,1155.5 L1519.0,1167.3 L1529.8,1176.0 L1540.6,1194.3 L1542.7,1204.0 L1546.0,1221.9 L1556.8,1219.2 L1552.0,1226.0 L1544.9,1226.0 L1529.8,1209.4 L1519.0,1198.6 L1513.6,1186.8 L1508.2,1182.4 L1506.0,1170.6 L1503.9,1158.7 L1495.8,1151.1 L1495.2,1143.6 L1484.4,1126.3ZM1575.1,1102.0 L1581.6,1099.9 L1589.2,1101.5 L1596.7,1115.5 L1605.4,1120.9 L1616.1,1126.3 L1625.0,1124.1 L1634.0,1131.0 L1630.0,1126.0 L1624.0,1136.0 L1612.9,1144.7 L1598.9,1144.7 L1596.2,1130.6 L1593.5,1139.3 L1589.2,1128.5 L1579.4,1118.8ZM1472.5,1305.0 L1485.0,1302.5 L1482.5,1317.5 L1472.5,1320.0ZM1455.0,1325.0 L1467.5,1358.8 L1462.5,1355.0 L1455.0,1337.5ZM1485.0,1365.0 L1492.5,1395.0 L1486.3,1382.5ZM820.0,1403.0 L829.0,1408.0 L827.0,1410.6 L821.0,1408.0Z"/>
<path fill="#336f80" d="M1323.8,1015.0 L1328.8,1015.0 L1328.8,1030.0 L1323.8,1032.5 L1321.3,1025.0ZM1325.0,1003.8 L1328.1,1000.0 L1328.8,1010.0 L1325.0,1011.3ZM1348.8,1041.3 L1366.3,1038.8 L1363.8,1050.0 L1358.8,1047.5ZM1475.1,1064.1 L1481.3,1061.7 L1487.4,1059.2 L1485.0,1062.9 L1479.4,1066.6ZM1419.0,1059.2 L1421.5,1060.4 L1427.0,1061.7 L1435.6,1062.9 L1435.0,1064.1 L1427.0,1064.1 L1419.0,1061.7ZM857.5,933.8 L871.3,938.8 L867.5,940.6 L856.9,936.3ZM857.5,962.5 L861.3,967.5 L870.0,968.1 L865.0,970.0ZM709.5,750.0 L709.5,764.0 L712.0,771.9 L718.9,770.6 L721.4,778.8 L737.0,764.0 L737.0,750.0ZM738.3,750.0 L754.5,750.0 L755.1,770.0 L750.1,773.8 L743.3,771.9ZM730.8,787.5 L739.5,782.5 L744.5,783.8 L735.8,791.9ZM754.4,790.0 L760.0,792.5 L758.8,798.1 L754.4,795.0Z"/>
</g>
<circle cx="638" cy="1025.7" r="66.7" fill="rgba(126,208,63,0.40)" stroke="#7ed03f" stroke-width="2"/>
<circle cx="1251" cy="883" r="49" fill="rgba(240,80,138,0.38)" stroke="#f0508c" stroke-width="2.2"/>
<circle cx="541.2" cy="819.2" r="14.5" fill="rgba(168,104,224,0.34)" stroke="#a868e0" stroke-width="2"/>
<circle cx="1773.6" cy="1159" r="19.2" fill="rgba(168,104,224,0.34)" stroke="#a868e0" stroke-width="2"/>
</svg>
<div class="t lab" style="left:531.6px;top:893.1px;font-size:22.9px;letter-spacing:-0.3px">NORTH</div>
<div class="t lab" style="left:521.0px;top:919.7px;font-size:22.61px;letter-spacing:-0.717px">AMERICA</div>
<div class="t lab" style="left:1287.7px;top:907.3px;font-size:21.16px;letter-spacing:0.06px">EUROPE</div>
<div class="t lab" style="left:1907.7px;top:853.0px;font-size:21.88px;letter-spacing:0.6px">ASIA</div>
<div class="t lab" style="left:1330.6px;top:1274.5px;font-size:21.74px;letter-spacing:0.28px">AFRICA</div>
<div class="t lab" style="left:839.6px;top:1411.9px;font-size:21.88px;letter-spacing:0.075px">SOUTH</div>
<div class="t lab" style="left:827.9px;top:1438.3px;font-size:22.46px;letter-spacing:-0.55px">AMERICA</div>
<div class="t lab" style="left:2104.1px;top:1406.5px;font-size:22.32px;letter-spacing:-0.183px">OCEANIA</div>
<div class="t ocn" style="left:953.1px;top:1200.9px;font-size:20.72px;letter-spacing:0.485px;font-style:italic">Atlantic Ocean</div>
<div class="t ocn" style="left:428.8px;top:1293.6px;font-size:19.86px;letter-spacing:0.667px;font-style:italic">Pacific Ocean</div>
<div class="t ocn" style="left:1652.4px;top:1353.3px;font-size:20.0px;letter-spacing:0.709px;font-style:italic">Indian Ocean</div>
<div class="t bub" style="left:594.6px;top:1012.4px;font-size:25.65px;letter-spacing:-1.433px">387.75K</div>
<div class="t bub" style="left:1207.5px;top:869.7px;font-size:24.06px;letter-spacing:-0.533px">260.34K</div>
</body></html>
